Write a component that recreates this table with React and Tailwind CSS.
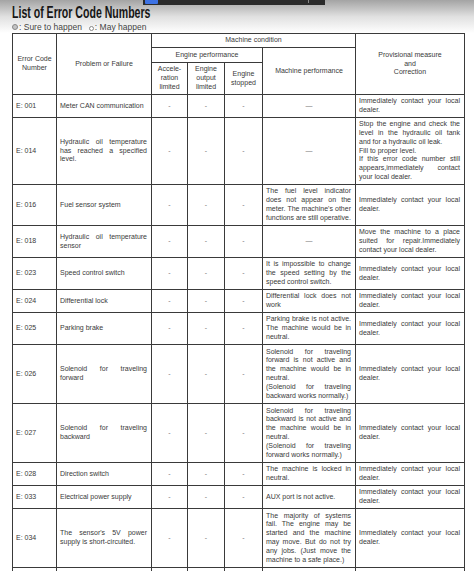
import React from 'react';

const contact = 'Immediately contact your local dealer.';

const rows = [
  { code: 'E: 001', problem: 'Meter CAN communication', perf: null, fix: contact, h: 'h-[23px]' },
  {
    code: 'E: 014',
    problem: 'Hydraulic oil temperature has reached a specified level.',
    perf: null,
    fix: (
      <>
        Stop the engine and check the level in the hydraulic oil tank and for a hydraulic oil leak.
        <br />
        Fill to proper level.
        <br />
        If this error code number still appears,immediately contact your local dealer.
      </>
    ),
    h: 'h-[67px]',
  },
  {
    code: 'E: 016',
    problem: 'Fuel sensor system',
    perf: "The fuel level indicator does not appear on the meter. The machine's other functions are still operative.",
    fix: contact,
    h: 'h-[41px]',
  },
  {
    code: 'E: 018',
    problem: 'Hydraulic oil temperature sensor',
    perf: null,
    fix: 'Move the machine to a place suited for repair.Immediately contact your local dealer.',
    h: 'h-[32px]',
  },
  {
    code: 'E: 023',
    problem: 'Speed control switch',
    perf: 'It is impossible to change the speed setting by the speed control switch.',
    fix: contact,
    h: 'h-[32px]',
  },
  { code: 'E: 024', problem: 'Differential lock', perf: 'Differential lock does not work', fix: contact, h: 'h-[23px]' },
  {
    code: 'E: 025',
    problem: 'Parking brake',
    perf: 'Parking brake is not active. The machine would be in neutral.',
    fix: contact,
    h: 'h-[32px]',
  },
  {
    code: 'E: 026',
    problem: 'Solenoid for traveling forward',
    perf: (
      <>
        Solenoid for traveling forward is not active and the machine would be in neutral.
        <br />
        (Solenoid for traveling backward works normally.)
      </>
    ),
    fix: contact,
    h: 'h-[59px]',
  },
  {
    code: 'E: 027',
    problem: 'Solenoid for traveling backward',
    perf: (
      <>
        Solenoid for traveling backward is not active and the machine would be in neutral.
        <br />
        (Solenoid for traveling forward works normally.)
      </>
    ),
    fix: contact,
    h: 'h-[59px]',
  },
  { code: 'E: 028', problem: 'Direction switch', perf: 'The machine is locked in neutral.', fix: contact, h: 'h-[23px]' },
  { code: 'E: 033', problem: 'Electrical power supply', perf: 'AUX port is not active.', fix: contact, h: 'h-[23px]' },
  {
    code: 'E: 034',
    problem: "The sensor's 5V power supply is short-circuited.",
    perf: 'The majority of systems fail. The engine may be started and the machine may move. But do not try any jobs. (Just move the machine to a safe place.)',
    fix: contact,
    h: 'h-[59px]',
  },
];

const cell = 'border border-[#3a3a3a] px-[3px] py-0 align-middle text-[7px] leading-[8.8px]';

export default function App() {
  return (
    <div className="relative w-[474px] h-[571px] overflow-hidden bg-white font-['Liberation_Sans',Arial,sans-serif] text-[#333]">
      {/* title block */}
      <div className="h-[33px] bg-gradient-to-b from-[#a4a4a4] via-[#e0e0e0] to-white pl-[12px] pt-[4px]">
        <div className="h-[18px] origin-left scale-x-[0.66] whitespace-nowrap text-[16px] leading-[18px] font-bold text-[#161616]">
          List of Error Code Numbers
        </div>
        <div className="flex items-center h-[10px] text-[8.5px] leading-[10px] text-[#444] whitespace-nowrap">
          <span className="w-[6px] h-[6px] rounded-full border border-[#888] bg-[#c4c4c4]" />
          <span className="ml-[1px]">: Sure to happen</span>
          <span className="ml-[7px] mt-[2px] w-[5px] h-[5px] rounded-full border border-[#888] bg-white" />
          <span className="ml-[1px]">: May happen</span>
        </div>
      </div>

      {/* browser bar peeking in */}
      <div className="absolute top-0 left-[143px] w-[182px] h-[5px] bg-[#2b2b2b] flex">
        <div className="ml-[2px] w-[13px] h-[4px] bg-[#3d72e4] rounded-b-[1px]" />
        <div className="ml-auto mr-[16px] w-[1px] h-[3px] bg-[#888]" />
      </div>

      <table className="ml-[12px] w-[452px] table-fixed border-collapse text-[#3a3a3a]">
        <colgroup>
          <col className="w-[44px]" />
          <col className="w-[95px]" />
          <col className="w-[36px]" />
          <col className="w-[37px]" />
          <col className="w-[38px]" />
          <col className="w-[93px]" />
          <col className="w-[109px]" />
        </colgroup>
        <thead>
          <tr className="h-[14px]">
            <th rowSpan={3} className={`${cell} font-normal text-center`}>
              Error Code
              <br />
              Number
            </th>
            <th rowSpan={3} className={`${cell} font-normal text-center`}>
              Problem or Failure
            </th>
            <th colSpan={4} className={`${cell} font-normal text-center`}>
              Machine condition
            </th>
            <th rowSpan={3} className={`${cell} font-normal text-center`}>
              Provisional measure
              <br />
              and
              <br />
              Correction
            </th>
          </tr>
          <tr className="h-[15px]">
            <th colSpan={3} className={`${cell} font-normal text-center`}>
              Engine performance
            </th>
            <th rowSpan={2} className={`${cell} font-normal text-center`}>
              Machine performance
            </th>
          </tr>
          <tr className="h-[32px]">
            <th className={`${cell} font-normal text-center`}>
              Accele-
              <br />
              ration
              <br />
              limited
            </th>
            <th className={`${cell} font-normal text-center`}>
              Engine
              <br />
              output
              <br />
              limited
            </th>
            <th className={`${cell} font-normal text-center`}>
              Engine
              <br />
              stopped
            </th>
          </tr>
        </thead>
        <tbody>
          {rows.map((r) => (
            <tr key={r.code} className={r.h}>
              <td className={cell}>{r.code}</td>
              <td className={`${cell} text-justify pr-[4px]`}>{r.problem}</td>
              <td className={`${cell} text-center text-[#777]`}>-</td>
              <td className={`${cell} text-center text-[#777]`}>-</td>
              <td className={`${cell} text-center text-[#777]`}>-</td>
              {r.perf ? (
                <td className={`${cell} text-justify pr-[4px]`}>{r.perf}</td>
              ) : (
                <td className={`${cell} text-center text-[#777]`}>—</td>
              )}
              <td className={`${cell} text-justify pr-[4px]`}>{r.fix}</td>
            </tr>
          ))}
          <tr className="h-[40px]">
            <td className={cell} />
            <td className={cell} />
            <td className={cell} />
            <td className={cell} />
            <td className={cell} />
            <td className={cell} />
            <td className={cell} />
          </tr>
        </tbody>
      </table>
    </div>
  );
}
